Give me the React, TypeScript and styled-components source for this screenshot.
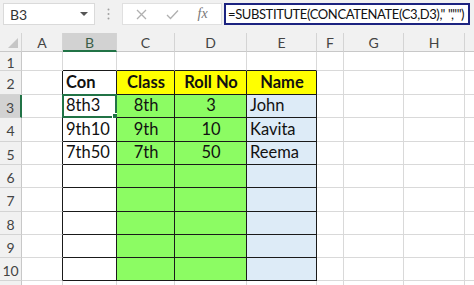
import React from "react";
import styled, { createGlobalStyle } from "styled-components";

const Global = createGlobalStyle`
  html, body { margin: 0; padding: 0; background: #ffffff; overflow: hidden; }
  body { font-family: Lato, "Liberation Sans", sans-serif; }
  * { box-sizing: border-box; }
`;

const Page = styled.div`
  width: 474px;
  height: 285px;
  overflow: hidden;
  display: flex;
  flex-direction: column;
`;

const Toolbar = styled.div`
  height: 33px;
  flex: none;
  background: #f1f1f1;
  display: flex;
  align-items: flex-start;
  padding: 3px 4px 0 3px;
`;

const NameBox = styled.div`
  width: 92px;
  height: 22px;
  background: #fff;
  border: 1px solid #dadada;
  display: flex;
  align-items: center;
  justify-content: space-between;
  padding: 0 6px 0 6px;
  font-size: 14px;
  color: #333;
`;

const Caret = styled.span`
  width: 0;
  height: 0;
  border-left: 4px solid transparent;
  border-right: 4px solid transparent;
  border-top: 4px solid #555;
`;

const Grip = styled.div`
  width: 27px;
  height: 22px;
  display: flex;
  align-items: center;
  justify-content: center;
`;

const Buttons = styled.div`
  width: 100px;
  height: 22px;
  background: #fff;
  border: 1px solid #e0e0e0;
  display: flex;
  align-items: center;
  justify-content: space-around;
  padding: 0 4px 0 4px;
  color: #a8a8a8;
`;

const Fx = styled.span`
  font-family: "Liberation Serif", serif;
  font-style: italic;
  font-size: 14px;
  color: #777;
`;

const FormulaBar = styled.div`
  flex: 1;
  margin-left: 2px;
  height: 22px;
  background: #fff;
  border: 2px solid #1c2380;
  display: flex;
  align-items: center;
  padding-left: 2px;
  font-size: 13px;
  letter-spacing: -0.4px;
  color: #111;
  white-space: nowrap;
  overflow: hidden;
`;

const Sheet = styled.div`
  display: grid;
  grid-template-columns: 22px 41px 54px 58px 72px 70px 27px 60px 61px 40px;
  grid-template-rows: 19px 19px 24px 23px 24px 23px 23px 24px 23px 23px 23px 23px;
`;

const Corner = styled.div`
  background: #f1f1f1;
  border-right: 1px solid #d4d4d4;
  border-bottom: 1px solid #c8c8c8;
  position: relative;
  &::after {
    content: "";
    position: absolute;
    right: 3px;
    bottom: 3px;
    width: 0;
    height: 0;
    border-left: 10px solid transparent;
    border-bottom: 10px solid #c6c6c6;
  }
`;

const ColHead = styled.div<{ $sel?: boolean }>`
  background: ${(p) => (p.$sel ? "#d2d2d2" : "#f1f1f1")};
  border-right: 1px solid #d4d4d4;
  border-bottom: ${(p) => (p.$sel ? "2px solid #217346" : "1px solid #c8c8c8")};
  display: flex;
  align-items: center;
  justify-content: center;
  font-size: 14px;
  color: ${(p) => (p.$sel ? "#3b5e48" : "#444")};
  padding-top: 1px;
`;

const RowHead = styled.div<{ $sel?: boolean }>`
  background: ${(p) => (p.$sel ? "#d2d2d2" : "#f1f1f1")};
  border-right: ${(p) => (p.$sel ? "2px solid #217346" : "1px solid #c8c8c8")};
  border-bottom: 1px solid #d4d4d4;
  display: flex;
  align-items: center;
  justify-content: center;
  font-size: 14px;
  color: #444;
  padding-top: 2px;
`;

type Fill = "none" | "yellow" | "green" | "blue";
const fills: Record<Fill, string> = {
  none: "#ffffff",
  yellow: "#ffff00",
  green: "#8cfc63",
  blue: "#ddebf7",
};

const Cell = styled.div<{
  $fill: Fill;
  $rb: boolean;
  $bb: boolean;
  $align: "left" | "center";
  $bold?: boolean;
}>`
  position: relative;
  background: ${(p) => fills[p.$fill]};
  border-right: 1px solid ${(p) => (p.$rb ? "#1a1a1a" : "#d9d9d9")};
  border-bottom: 1px solid ${(p) => (p.$bb ? "#1a1a1a" : "#d9d9d9")};
  display: flex;
  align-items: flex-end;
  justify-content: ${(p) => (p.$align === "center" ? "center" : "flex-start")};
  padding: 0 2px 2px 3px;
  font-size: 16.5px;
  font-weight: ${(p) => (p.$bold ? 700 : 400)};
  color: #111;
  white-space: nowrap;
  overflow: visible;
`;

const Selection = styled.div`
  position: absolute;
  left: -1px;
  top: -1px;
  right: -1px;
  bottom: -1px;
  border: 2px solid #217346;
  pointer-events: none;
  &::after {
    content: "";
    position: absolute;
    right: -4px;
    bottom: -4px;
    width: 5px;
    height: 5px;
    background: #217346;
    border: 1px solid #fff;
  }
`;

const cols = ["A", "B", "C", "D", "E", "F", "G", "H", ""];

type CellDef = { text?: string; fill: Fill; align: "left" | "center"; bold?: boolean };

const tableRows: Record<number, CellDef[]> = {
  2: [
    { text: "Con", fill: "none", align: "left", bold: true },
    { text: "Class", fill: "yellow", align: "center", bold: true },
    { text: "Roll No", fill: "yellow", align: "center", bold: true },
    { text: "Name", fill: "yellow", align: "center", bold: true },
  ],
  3: [
    { text: "8th3", fill: "none", align: "left" },
    { text: "8th", fill: "green", align: "center" },
    { text: "3", fill: "green", align: "center" },
    { text: "John", fill: "blue", align: "left" },
  ],
  4: [
    { text: "9th10", fill: "none", align: "left" },
    { text: "9th", fill: "green", align: "center" },
    { text: "10", fill: "green", align: "center" },
    { text: "Kavita", fill: "blue", align: "left" },
  ],
  5: [
    { text: "7th50", fill: "none", align: "left" },
    { text: "7th", fill: "green", align: "center" },
    { text: "50", fill: "green", align: "center" },
    { text: "Reema", fill: "blue", align: "left" },
  ],
};

const emptyTableRow: CellDef[] = [
  { fill: "none", align: "left" },
  { fill: "green", align: "center" },
  { fill: "green", align: "center" },
  { fill: "blue", align: "left" },
];

const XIcon = () => (
  <svg width="11" height="11" viewBox="0 0 11 11">
    <path d="M1 1 L10 10 M10 1 L1 10" stroke="#b0b0b0" strokeWidth="1.3" fill="none" />
  </svg>
);

const CheckIcon = () => (
  <svg width="13" height="11" viewBox="0 0 13 11">
    <path d="M1 6 L4.5 9.5 L12 1.5" stroke="#b0b0b0" strokeWidth="1.3" fill="none" />
  </svg>
);

const Dots = () => (
  <svg width="3" height="12" viewBox="0 0 3 12">
    <circle cx="1.5" cy="1.5" r="1" fill="#a0a0a0" />
    <circle cx="1.5" cy="6" r="1" fill="#a0a0a0" />
    <circle cx="1.5" cy="10.5" r="1" fill="#a0a0a0" />
  </svg>
);

export default function App() {
  const rows = [1, 2, 3, 4, 5, 6, 7, 8, 9, 10, 11];
  return (
    <Page>
      <Global />
      <Toolbar>
        <NameBox>
          <span>B3</span>
          <Caret />
        </NameBox>
        <Grip>
          <Dots />
        </Grip>
        <Buttons>
          <XIcon />
          <CheckIcon />
          <Fx>fx</Fx>
        </Buttons>
        <FormulaBar>=SUBSTITUTE(CONCATENATE(C3,D3)," ","")</FormulaBar>
      </Toolbar>
      <Sheet>
        <Corner />
        {cols.map((c, i) => (
          <ColHead key={i} $sel={c === "B"}>
            {c}
          </ColHead>
        ))}
        {rows.map((r) => {
          const inTable = r >= 2 && r <= 10;
          const defs = inTable ? tableRows[r] || emptyTableRow : null;
          return (
            <React.Fragment key={r}>
              <RowHead $sel={r === 3}>{r <= 10 ? r : ""}</RowHead>
              {cols.map((c, ci) => {
                const tIdx = ci - 1; // B..E -> 0..3
                const isT = inTable && tIdx >= 0 && tIdx <= 3;
                const def = isT && defs ? defs[tIdx] : null;
                const rb = isT || (inTable && c === "A");
                const bb = isT || (r === 1 && tIdx >= 0 && tIdx <= 3);
                return (
                  <Cell
                    key={ci}
                    $fill={def ? def.fill : "none"}
                    $rb={rb}
                    $bb={bb}
                    $align={def ? def.align : "left"}
                    $bold={def?.bold}
                  >
                    {def?.text}
                    {r === 3 && c === "B" && <Selection />}
                  </Cell>
                );
              })}
            </React.Fragment>
          );
        })}
      </Sheet>
    </Page>
  );
}
